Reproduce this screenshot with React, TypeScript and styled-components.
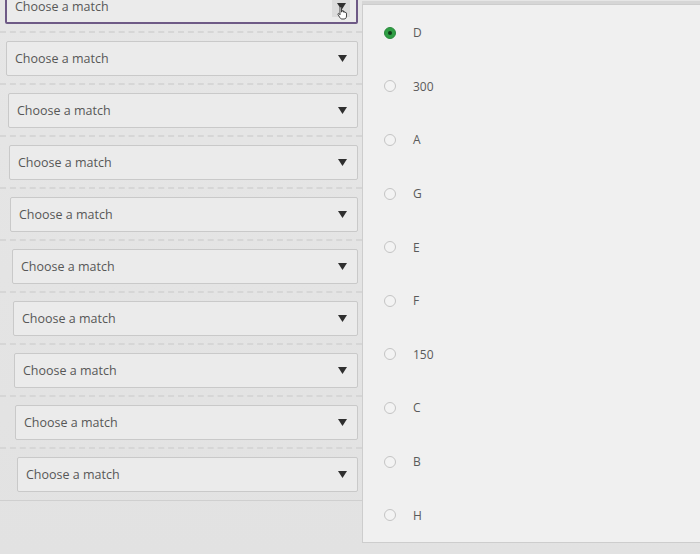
import styled, { createGlobalStyle } from 'styled-components';

const GlobalStyle = createGlobalStyle`
  html, body {
    margin: 0;
    padding: 0;
    background: #e4e4e4;
    font-family: "Open Sans", "Noto Sans", sans-serif;
    overflow: hidden;
  }
`;

const Page = styled.div`
  width: 700px;
  height: 554px;
  display: flex;
  background: linear-gradient(180deg, #e6e6e6 0%, #e2e2e2 100%);
  overflow: hidden;
`;

const Left = styled.div`
  width: 362px;
  flex-shrink: 0;
  margin-top: -19px;
  display: flex;
  flex-direction: column;
`;

const Row = styled.div<{ $last?: boolean }>`
  height: 52px;
  padding-left: 5px;
  padding-right: 4px;
  display: flex;
  align-items: center;
  border-bottom: ${(p) => (p.$last ? '1px solid #cfcfcf' : '2px dashed #d6d6d6')};
  box-sizing: border-box;
`;

const Select = styled.div<{ $focused?: boolean; $shift: number }>`
  flex: 1;
  margin-left: ${(p) => p.$shift}px;
  height: 35px;
  box-sizing: border-box;
  display: flex;
  align-items: center;
  justify-content: space-between;
  padding: 0 6px 0 8px;
  background: #ebebeb;
  border: ${(p) => (p.$focused ? '2px solid #6e5a86' : '1px solid #c9c9c9')};
  border-radius: 2px;
  color: #575757;
  font-size: 12.5px;
`;

const Arrow = styled.span<{ $hover?: boolean }>`
  width: 18px;
  height: 22px;
  display: flex;
  align-items: center;
  justify-content: center;
  background: ${(p) => (p.$hover ? '#dcdcdc' : 'transparent')};
  position: relative;
`;

const Cursor = styled.svg`
  position: absolute;
  left: 5px;
  top: 11px;
`;

const Panel = styled.div`
  flex: 1;
  margin-top: 4px;
  margin-bottom: 11px;
  background: #f0f0f0;
  border: 1px solid #cdcdcd;
  border-right: none;
  box-shadow: 0 -3px 0 #d6d6d6;
  display: flex;
  flex-direction: column;
  padding-left: 21px;
`;

const Option = styled.div`
  height: 53.8px;
  display: flex;
  align-items: center;
  gap: 17px;
  color: #5a5a5a;
  font-size: 12px;
  &:first-child {
    margin-top: 1px;
  }
`;

const Radio = styled.span<{ $checked?: boolean }>`
  width: 12px;
  height: 12px;
  border-radius: 50%;
  box-sizing: border-box;
  display: flex;
  align-items: center;
  justify-content: center;
  background: ${(p) => (p.$checked ? '#2f9e44' : '#f3f3f3')};
  border: ${(p) => (p.$checked ? '1px solid #2a8a3c' : '1px solid #c4c4c4')};
  &::after {
    content: '';
    display: ${(p) => (p.$checked ? 'block' : 'none')};
    width: 4px;
    height: 4px;
    border-radius: 50%;
    background: #123d1c;
  }
`;

const Triangle = () => (
  <svg width="9" height="7" viewBox="0 0 9 7">
    <path d="M0 0 L9 0 L4.5 7 Z" fill="#2f2f2f" />
  </svg>
);

const options = ['D', '300', 'A', 'G', 'E', 'F', '150', 'C', 'B', 'H'];

export default function App() {
  return (
    <>
      <GlobalStyle />
      <Page>
        <Left>
          {options.map((_, i) => (
            <Row key={i} $last={i === options.length - 1}>
              <Select $focused={i === 0} $shift={Math.round(i * 1.3)}>
                <span>Choose a match</span>
                <Arrow $hover={i === 0}>
                  <Triangle />
                  {i === 0 && (
                    <Cursor width="12" height="14" viewBox="0 0 12 14">
                      <path
                        d="M3 1.5 C3 0.7 4.5 0.7 4.5 1.5 V6 L5 6 V5 C5 4.3 6.5 4.3 6.5 5 V6.2 C6.5 5.5 8 5.5 8 6.2 V7 C8 6.4 9.5 6.4 9.5 7.2 V10 C9.5 12 8.5 13 7 13 H5 C3.8 13 3.2 12.2 2.5 11 L1 8.5 C0.6 7.8 1.6 7 2.3 7.8 L3 8.8 Z"
                        fill="#fff"
                        stroke="#333"
                        strokeWidth="0.9"
                      />
                    </Cursor>
                  )}
                </Arrow>
              </Select>
            </Row>
          ))}
        </Left>
        <Panel>
          {options.map((o, i) => (
            <Option key={o}>
              <Radio $checked={i === 0} />
              <span>{o}</span>
            </Option>
          ))}
        </Panel>
      </Page>
    </>
  );
}
